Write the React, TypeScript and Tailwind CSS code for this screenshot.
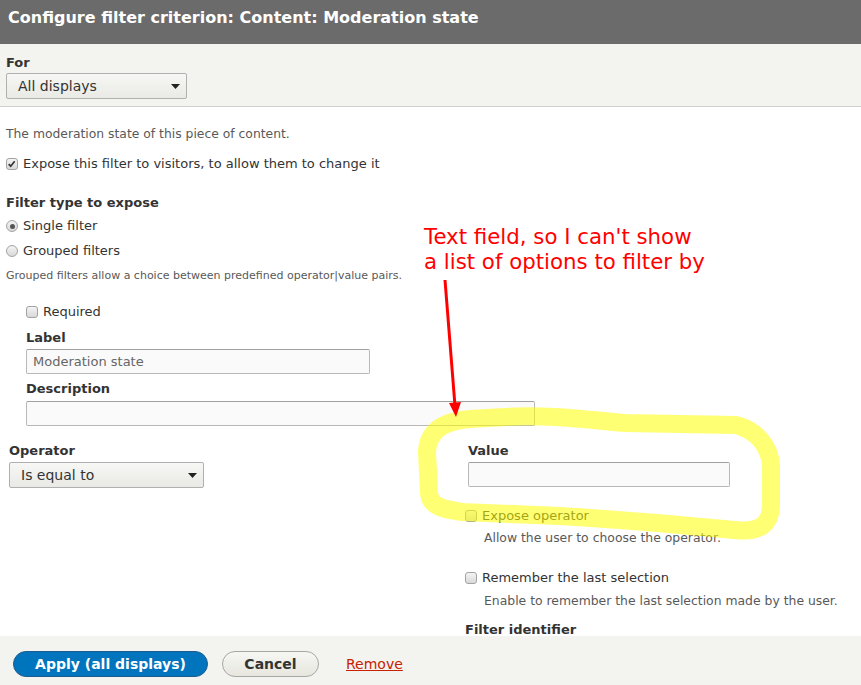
import React from "react";

const FONT = "font-['DejaVu_Sans',sans-serif]";

function Check({ checked = false }: { checked?: boolean }) {
  return (
    <span className="relative inline-block h-[12px] w-[12px] shrink-0 rounded-[3px] border border-[#a3a3a3] bg-gradient-to-b from-[#f4f4f4] to-[#d9d9d9]">
      {checked && (
        <svg viewBox="0 0 12 12" className="absolute left-[0px] top-[0px] h-[10px] w-[10px]">
          <path d="M2 6.2 L4.4 8.6 L9.2 2.6" fill="none" stroke="#333" strokeWidth="2" />
        </svg>
      )}
    </span>
  );
}

function Radio({ checked = false }: { checked?: boolean }) {
  return (
    <span className="relative inline-flex h-[12px] w-[12px] shrink-0 items-center justify-center rounded-full border border-[#a3a3a3] bg-gradient-to-b from-[#f4f4f4] to-[#d9d9d9]">
      {checked && <span className="h-[5px] w-[5px] rounded-full bg-[#555]" />}
    </span>
  );
}

function Select({ value, width }: { value: string; width: string }) {
  return (
    <div
      className={`flex h-[26px] ${width} items-center justify-between rounded-[2px] border border-[#b0b0b0] bg-gradient-to-b from-[#f7f7f5] to-[#e9e9e5] pl-[11px] pr-[6px] text-[14px] text-[#333]`}
    >
      <span>{value}</span>
      <svg viewBox="0 0 9 5" className="mt-[1px] h-[5px] w-[9px]">
        <path d="M0 0 L9 0 L4.5 5 Z" fill="#222" />
      </svg>
    </div>
  );
}

function TextInput({ value = "", width }: { value?: string; width: string }) {
  return (
    <div
      className={`flex h-[25px] ${width} items-center rounded-[2px] border border-[#b8b8b8] border-t-[#a0a0a0] bg-[#fafafa] px-[6px] text-[13px] text-[#666]`}
    >
      {value}
    </div>
  );
}

export default function App() {
  return (
    <div className={`relative flex h-[685px] w-[861px] flex-col overflow-hidden bg-white ${FONT} text-[#333]`}>
      {/* Title */}
      <div className="h-[44px] shrink-0 bg-[#6b6b6b] pl-[8px] pt-[7px] text-[16px] font-bold leading-[22px] text-white">
        Configure filter criterion: Content: Moderation state
      </div>

      {/* Display selector */}
      <div className="shrink-0 border-b border-[#cfcfcf] bg-[#f3f3ef] pb-[7px] pl-[6px] pt-[11px]">
        <div className="text-[13px] font-bold leading-[16px]">For</div>
        <div className="mt-[2px]">
          <Select value="All displays" width="w-[181px]" />
        </div>
      </div>

      {/* Form body, clipped above the footer */}
      <div className="flex-1 overflow-hidden">
        <div className="pl-[6px] pt-[19px]">
          <div className="text-[12.35px] leading-[16px] text-[#595959]">
            The moderation state of this piece of content.
          </div>
          <label className="mt-[14px] flex h-[16px] items-center gap-[5px] text-[13px] leading-[16px]">
            <Check checked />
            Expose this filter to visitors, to allow them to change it
          </label>

          <div className="mt-[23px] text-[13px] font-bold leading-[16px]">Filter type to expose</div>
          <label className="mt-[7px] flex h-[16px] items-center gap-[5px] text-[13px] leading-[16px]">
            <Radio checked />
            Single filter
          </label>
          <label className="mt-[9px] flex h-[16px] items-center gap-[5px] text-[13px] leading-[16px]">
            <Radio />
            Grouped filters
          </label>
          <div className="mt-[10px] text-[11px] leading-[14px] text-[#595959]">
            Grouped filters allow a choice between predefined operator|value pairs.
          </div>
        </div>

        <div className="pl-[26px]">
          <label className="mt-[21px] flex h-[16px] items-center gap-[5px] text-[13px] leading-[16px]">
            <Check />
            Required
          </label>
          <div className="mt-[10px] text-[13px] font-bold leading-[16px]">Label</div>
          <div className="mt-[3px]">
            <TextInput value="Moderation state" width="w-[344px]" />
          </div>
          <div className="mt-[7px] text-[13px] font-bold leading-[16px]">Description</div>
          <div className="mt-[4px]">
            <TextInput width="w-[509px]" />
          </div>
        </div>

        <div className="mt-[17px] flex">
          <div className="w-[465px] shrink-0 pl-[9px]">
            <div className="text-[13px] font-bold leading-[16px]">Operator</div>
            <div className="mt-[3px]">
              <Select value="Is equal to" width="w-[195px]" />
            </div>
          </div>
          <div className="flex-1">
            <div className="pl-[3px] text-[13px] font-bold leading-[16px]">Value</div>
            <div className="mt-[3px] pl-[3px]">
              <TextInput width="w-[262px]" />
            </div>
            <label className="mt-[21px] flex h-[16px] items-center gap-[5px] text-[13px] leading-[16px]">
              <Check />
              Expose operator
            </label>
            <div className="mt-[6px] pl-[19px] text-[12.4px] leading-[16px] text-[#595959]">
              Allow the user to choose the operator.
            </div>
            <label className="mt-[24px] flex h-[16px] items-center gap-[5px] text-[13px] leading-[16px]">
              <Check />
              Remember the last selection
            </label>
            <div className="mt-[7px] pl-[19px] text-[12.4px] leading-[16px] text-[#595959]">
              Enable to remember the last selection made by the user.
            </div>
            <div className="mt-[13px] text-[13px] font-bold leading-[16px]">Filter identifier</div>
          </div>
        </div>
      </div>

      {/* Footer */}
      <div className="flex h-[49px] shrink-0 items-start bg-[#f3f3ef] pl-[13px] pt-[15px]">
        <button className="flex h-[26px] w-[195px] items-center justify-center rounded-full border border-[#1e5c90] bg-[#0074bd] text-[14px] font-bold text-white">
          Apply (all displays)
        </button>
        <button className="ml-[14px] flex h-[26px] w-[97px] items-center justify-center rounded-full border border-[#a6a6a6] bg-gradient-to-b from-[#f6f6f3] to-[#e7e7df] text-[14px] font-bold text-[#333]">
          Cancel
        </button>
        <a className="ml-[27px] mt-[4px] text-[14px] leading-[18px] text-[#c72100] underline">Remove</a>
      </div>

      {/* Annotation layer */}
      <div className="pointer-events-none absolute left-[424px] top-[224px] text-[21.3px] leading-[25px] text-[#ff0000]">
        Text field, so I can't show
        <br />
        a list of options to filter by
      </div>
      <svg className="pointer-events-none absolute left-0 top-0" width="861" height="685">
        <path
          d="M470 419 C445 421 428 430 427 452 L429 492 C429 505 440 509 462 512 L560 516 C630 520 690 526 735 530 C760 533 770 524 771 507 L771 466 C770 446 756 430 736 425 L625 423 C590 420 545 414 505 417 Z"
          fill="none"
          stroke="#ffff00"
          strokeOpacity="0.55"
          strokeWidth="18"
          strokeLinejoin="round"
        />
        <line x1="445" y1="280" x2="455" y2="406" stroke="#ff0000" strokeWidth="3" />
        <path d="M449 403 L461 402 L456 417 Z" fill="#ff0000" />
      </svg>
    </div>
  );
}
